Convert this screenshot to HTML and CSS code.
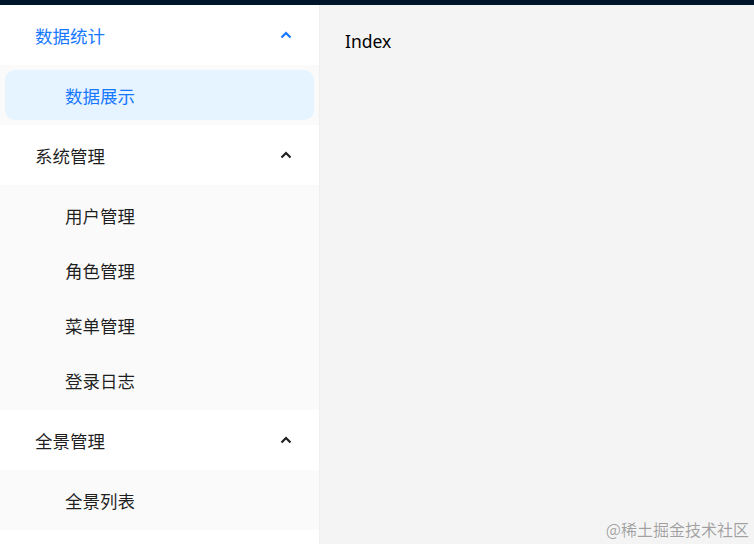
FILE: index.html
```html
<!DOCTYPE html>
<html lang="zh-CN">
<head>
    <meta charset="UTF-8">
    <meta name="viewport" content="width=device-width, initial-scale=1.0">
    <title>Index</title>
    <link rel="stylesheet" href="styles.css">
</head>
<body>
    <div class="top-bar"></div>
    <div class="layout">
        <aside class="sidebar">
            <div class="menu-group">
                <div class="menu-title active">
                    <span>数据统计</span>
                    <svg class="arrow" width="12" height="8" viewBox="0 0 12 8"><polyline points="1.5,6.5 6,2 10.5,6.5" fill="none" stroke="currentColor" stroke-width="2.2"/></svg>
                </div>
                <div class="submenu">
                    <div class="menu-item selected">数据展示</div>
                </div>
            </div>

            <div class="menu-group">
                <div class="menu-title">
                    <span>系统管理</span>
                    <svg class="arrow" width="12" height="8" viewBox="0 0 12 8"><polyline points="1.5,6.5 6,2 10.5,6.5" fill="none" stroke="currentColor" stroke-width="2.2"/></svg>
                </div>
                <div class="submenu">
                    <div class="menu-item">用户管理</div>
                    <div class="menu-item">角色管理</div>
                    <div class="menu-item">菜单管理</div>
                    <div class="menu-item">登录日志</div>
                </div>
            </div>

            <div class="menu-group">
                <div class="menu-title">
                    <span>全景管理</span>
                    <svg class="arrow" width="12" height="8" viewBox="0 0 12 8"><polyline points="1.5,6.5 6,2 10.5,6.5" fill="none" stroke="currentColor" stroke-width="2.2"/></svg>
                </div>
                <div class="submenu">
                    <div class="menu-item">全景列表</div>
                </div>
            </div>
        </aside>

        <main class="content">
            <p>Index</p>
            <div class="watermark">@稀土掘金技术社区</div>
        </main>
    </div>
</body>
</html>
```

FILE: styles.css
```css
* {
    box-sizing: border-box;
    margin: 0;
    padding: 0;
}

body {
    font-family: "Noto Sans", "Noto Sans CJK SC", sans-serif;
    font-size: 17.5px;
    color: rgba(0, 0, 0, 0.88);
    background-color: #f4f4f4;
    height: 544px;
    overflow: hidden;
}

.top-bar {
    height: 5px;
    background-color: #001529;
}

.layout {
    display: flex;
    height: 539px;
}

.sidebar {
    width: 320px;
    flex-shrink: 0;
    background-color: #fff;
    border-right: 1.5px solid #efefef;
}

.menu-title {
    height: 60px;
    display: flex;
    align-items: center;
    justify-content: space-between;
    padding: 0 27px 0 35px;
    cursor: pointer;
}

.menu-title.active {
    color: #1677ff;
}

.arrow {
    display: block;
    margin-top: -1px;
}

.submenu {
    background-color: #fafafa;
    padding: 5px 5px;
    display: flex;
    flex-direction: column;
    gap: 5px;
}

.menu-item {
    height: 50px;
    display: flex;
    align-items: center;
    padding-left: 60px;
    border-radius: 10px;
    cursor: pointer;
}

.menu-item.selected {
    background-color: #e6f4ff;
    color: #1677ff;
}

.content {
    flex: 1;
    position: relative;
    padding: 21px 25px;
    color: #000;
}

.content p {
    line-height: 30px;
}

.watermark {
    position: absolute;
    right: 5px;
    bottom: 3px;
    font-family: "Noto Sans CJK SC", sans-serif;
    font-size: 16px;
    color: rgba(0, 0, 0, 0.35);
}
```
